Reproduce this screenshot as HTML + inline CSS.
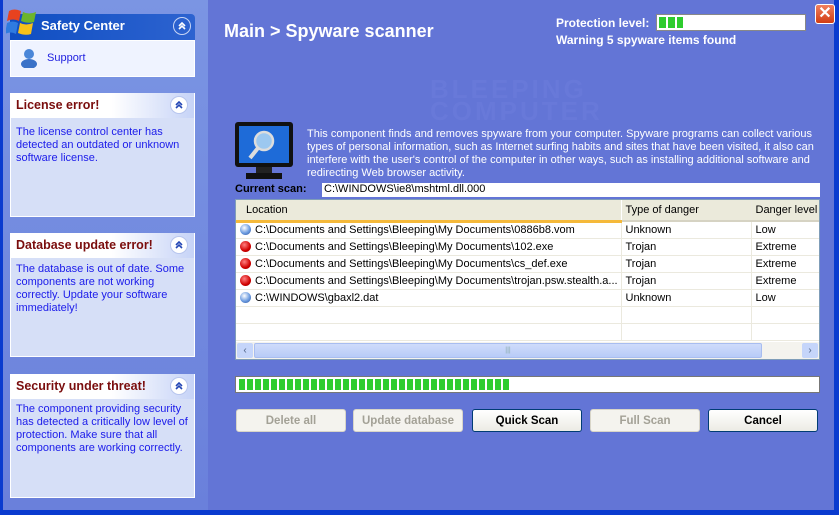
<!DOCTYPE html>
<html><head><style>
*{margin:0;padding:0;box-sizing:border-box}
body{width:839px;height:515px;overflow:hidden;background:#0a3bcf;font-family:"Liberation Sans",Tahoma,sans-serif;position:relative}
.abs{position:absolute}
#side{left:3px;top:0;width:205px;height:510px;background:linear-gradient(#7b95e3,#6a80db)}
#main{left:208px;top:0;width:626px;height:510px;background:#6375d6}
.box{position:absolute;left:10px;width:185px;background:#d6dff7;border:1px solid #fff;border-top:none}
.bh{height:25px;background:linear-gradient(90deg,#fff 55%,#c6d3f7);color:#7a0d0d;font-weight:bold;font-size:12.5px;padding:5px 0 0 5px;position:relative}
.chev{position:absolute;right:6px;top:3px;width:18px;height:18px;border-radius:50%;background:#fff;border:1px solid #b8c6ee}
.chev svg,.chevw svg{position:absolute;left:3px;top:3px}
.bt{color:#1b1bea;font-size:11px;padding:8px 5px;line-height:13px}
.wt{color:#fff;font-weight:bold}
table{border-collapse:collapse;font-size:11px}
td{height:17px;border-bottom:1px solid #ebe9de;border-right:1px solid #ebe9de;padding-left:4px;white-space:nowrap;overflow:hidden}
.dot{display:inline-block;width:11px;height:11px;border-radius:50%;vertical-align:-2px;margin-right:4px}
.r{background:radial-gradient(circle at 40% 35%,#ff8080,#d00000 60%,#800)}
.b{background:radial-gradient(circle at 40% 35%,#fff,#6b9be0 55%,#2a4f9a)}
.btn{position:absolute;top:409px;width:110px;height:23px;border-radius:3px;font-size:11.5px;font-weight:bold;text-align:center;line-height:22px}
.dis{background:#f4f3ee;color:#a3a196;border:1px solid #d8d5c8}
.en{background:linear-gradient(#fff,#ecebe4);color:#000;border:1px solid #003c74}
</style></head><body>
<div id="side" class="abs"></div>
<div id="main" class="abs"></div>

<div class="abs" style="left:10px;top:14px;width:185px;height:26px;background:linear-gradient(90deg,#0f4ec2,#2d63d0);border-radius:4px 4px 0 0"></div>
<div class="abs wt" style="left:41px;top:18px;font-size:13px">Safety Center</div>
<div class="abs chevw" style="left:173px;top:17px;width:18px;height:18px;border-radius:50%;border:1px solid #c8d5f5"><svg width="10" height="10" viewBox="0 0 10 10"><path d="M2 5 L5 2 L8 5 M2 8 L5 5 L8 8" stroke="#fff" stroke-width="1.6" fill="none"/></svg></div>
<svg class="abs" style="left:6px;top:8px" width="32" height="30" viewBox="0 0 32 30">
<path d="M3 3 Q8 0 15 3 L13 13 Q7 10 1 13Z" fill="#e8421f"/>
<path d="M17 4 Q23 7 30 4 L28 14 Q22 16 15 13Z" fill="#6cb52c"/>
<path d="M1 15 Q7 12 12 15 L10 26 Q5 23 -1 26Z" fill="#2f7be0"/>
<path d="M14 15 Q20 18 27 15 L25 26 Q19 28 12 25Z" fill="#f7c11a"/>
</svg>
<div class="abs" style="left:10px;top:40px;width:185px;height:37px;background:#eff3ff;border:1px solid #fff"></div>
<svg class="abs" style="left:20px;top:48px" width="18" height="20"><circle cx="9" cy="6" r="5" fill="#4a86d8"/><ellipse cx="9" cy="16" rx="8" ry="5" fill="#3a72c8"/></svg>
<div class="abs" style="left:47px;top:52px;font-size:11px;color:#2020e0">Support</div>

<div class="box" style="top:93px;height:124px"><div class="bh">License error!<div class="chev"><svg width="10" height="10" viewBox="0 0 10 10"><path d="M2 5 L5 2 L8 5 M2 8 L5 5 L8 8" stroke="#2346b5" stroke-width="1.6" fill="none"/></svg></div></div><div class="bt">The license control center has detected an outdated or unknown software license.</div></div>
<div class="box" style="top:233px;height:124px"><div class="bh">Database update error!<div class="chev"><svg width="10" height="10" viewBox="0 0 10 10"><path d="M2 5 L5 2 L8 5 M2 8 L5 5 L8 8" stroke="#2346b5" stroke-width="1.6" fill="none"/></svg></div></div><div class="bt" style="padding-top:5px">The database is out of date. Some components are not working correctly. Update your software immediately!</div></div>
<div class="box" style="top:374px;height:124px"><div class="bh">Security under threat!<div class="chev"><svg width="10" height="10" viewBox="0 0 10 10"><path d="M2 5 L5 2 L8 5 M2 8 L5 5 L8 8" stroke="#2346b5" stroke-width="1.6" fill="none"/></svg></div></div><div class="bt" style="padding-top:4px">The component providing security has detected a critically low level of protection. Make sure that all components are working correctly.</div></div>

<div class="abs wt" style="left:224px;top:21px;font-size:18px">Main &gt; Spyware scanner</div>
<div class="abs wt" style="left:556px;top:16px;font-size:12px">Protection level:</div>
<div class="abs" style="left:656px;top:14px;width:150px;height:17px;background:#fff;border:1px solid #888;padding:2px"><div style="width:24px;height:11px;background:repeating-linear-gradient(90deg,#2ecc2e 0 7px,transparent 7px 9px)"></div></div>
<div class="abs wt" style="left:556px;top:33px;font-size:12px">Warning 5 spyware items found</div>
<div class="abs" style="left:815px;top:4px;width:20px;height:20px;background:linear-gradient(#f08060,#d23c12);border:1px solid #fff;border-radius:3px;color:#fff;font-size:16px;text-align:center;line-height:18px;font-weight:bold">✕</div>
<div class="abs" style="left:430px;top:78px;font-size:26px;font-weight:bold;color:#6879d9;letter-spacing:3px;line-height:22px">BLEEPING<br>COMPUTER</div>

<svg class="abs" style="left:234px;top:121px" width="62" height="60"><rect x="1" y="1" width="58" height="45" rx="3" fill="#111"/><rect x="5" y="5" width="50" height="37" fill="#1e6bd8"/><circle cx="30" cy="20" r="9" fill="#9cc8f0" stroke="#ddd" stroke-width="2.5"/><line x1="24" y1="27" x2="16" y2="37" stroke="#ddd" stroke-width="4"/><rect x="22" y="46" width="16" height="6" fill="#222"/><rect x="12" y="52" width="36" height="6" fill="#111"/></svg>
<div class="abs" style="left:307px;top:128px;width:520px;font-size:11px;color:#fff;line-height:13px">This component finds and removes spyware from your computer. Spyware programs can collect various types of personal information, such as Internet surfing habits and sites that have been visited, it also can interfere with the user's control of the computer in other ways, such as installing additional software and redirecting Web browser activity.</div>
<div class="abs" style="left:235px;top:183px;font-size:11px;font-weight:bold;color:#000">Current scan:</div>
<div class="abs" style="left:322px;top:183px;width:498px;height:14px;background:#fff;font-size:11px;line-height:13px;padding-left:2px">C:\WINDOWS\ie8\mshtml.dll.000</div>

<div class="abs" style="left:235px;top:199px;width:585px;height:161px;background:#fff;border:1px solid #7f9db9;overflow:hidden">
<table style="width:620px;table-layout:fixed">
<colgroup><col style="width:385px"><col style="width:130px"><col style="width:105px"></colgroup>
<tr style="background:#ebeadb"><td style="height:21px;padding-left:10px;border-bottom:3px solid #f5b93a;border-right:1px solid #fff">Location</td><td style="height:21px;border-bottom:2px solid #d6d3c3">Type of danger</td><td style="height:21px;border-bottom:2px solid #d6d3c3">Danger level</td></tr>
<tr><td><span class="dot b"></span>C:\Documents and Settings\Bleeping\My Documents\0886b8.vom</td><td>Unknown</td><td>Low</td></tr>
<tr><td><span class="dot r"></span>C:\Documents and Settings\Bleeping\My Documents\102.exe</td><td>Trojan</td><td>Extreme</td></tr>
<tr><td><span class="dot r"></span>C:\Documents and Settings\Bleeping\My Documents\cs_def.exe</td><td>Trojan</td><td>Extreme</td></tr>
<tr><td><span class="dot r"></span>C:\Documents and Settings\Bleeping\My Documents\trojan.psw.stealth.a...</td><td>Trojan</td><td>Extreme</td></tr>
<tr><td><span class="dot b"></span>C:\WINDOWS\gbaxl2.dat</td><td>Unknown</td><td>Low</td></tr>
<tr><td></td><td></td><td></td></tr>
<tr><td></td><td></td><td></td></tr>
</table>
<div class="abs" style="left:0;top:142px;width:583px;height:17px;background:#f4f3ee">
<div class="abs" style="left:1px;top:1px;width:16px;height:15px;background:#c5d5fa;border-radius:2px;color:#4d6185;font-size:10px;text-align:center;line-height:15px">‹</div>
<div class="abs" style="left:18px;top:1px;width:508px;height:15px;background:linear-gradient(#cfdcfb,#b8cbf7);border:1px solid #a8bdf0;border-radius:2px;font-size:7px;text-align:center;color:#8aa;line-height:13px">|||</div>
<div class="abs" style="left:566px;top:1px;width:16px;height:15px;background:#c5d5fa;border-radius:2px;color:#4d6185;font-size:10px;text-align:center;line-height:15px">›</div>
</div>
</div>

<div class="abs" style="left:235px;top:376px;width:585px;height:17px;background:#fff;border:1px solid #777;padding:2px 3px"><div style="width:272px;height:11px;background:repeating-linear-gradient(90deg,#2ecc2e 0 6px,transparent 6px 8px)"></div></div>

<div class="btn dis" style="left:236px">Delete all</div>
<div class="btn dis" style="left:353px">Update database</div>
<div class="btn en" style="left:472px">Quick Scan</div>
<div class="btn dis" style="left:590px">Full Scan</div>
<div class="btn en" style="left:708px">Cancel</div>
</body></html>
